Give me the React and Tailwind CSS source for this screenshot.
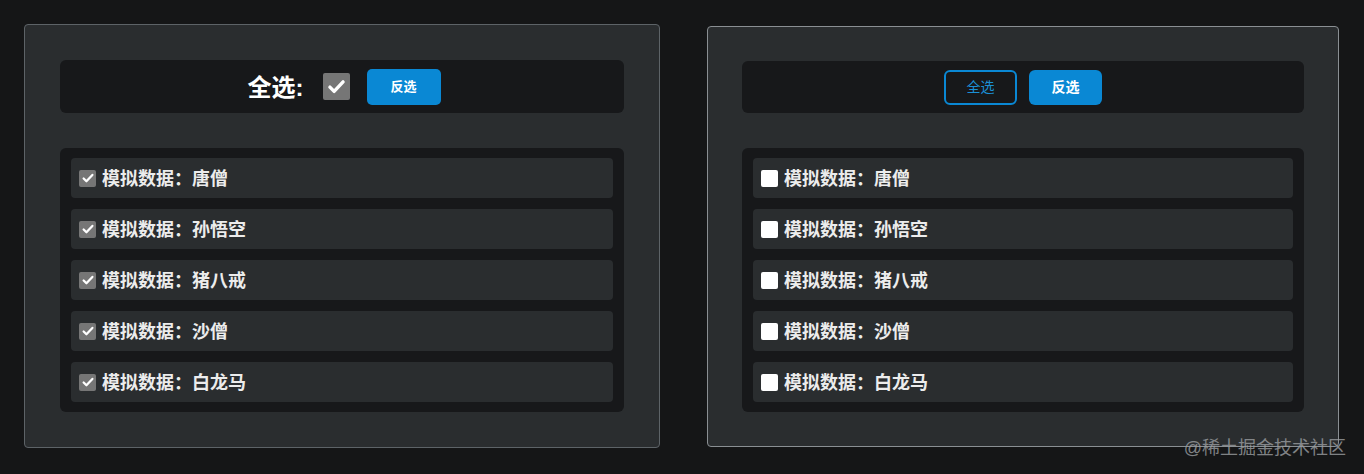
import { useState } from "react";

const names = ["唐僧", "孙悟空", "猪八戒", "沙僧", "白龙马"];

const font = { fontFamily: '"Liberation Sans", "Noto Sans CJK SC", sans-serif' };

function Check({ checked, big }) {
  const size = big ? "w-[27px] h-[27px]" : "w-[17px] h-[17px]";
  if (!checked) {
    return <span className={`${size} shrink-0 rounded-[2px] bg-white`} />;
  }
  return (
    <span className={`${size} shrink-0 rounded-[2px] bg-[#767676] flex items-center justify-center`}>
      <svg viewBox="0 0 16 16" className={big ? "w-[21px] h-[21px]" : "w-[14px] h-[14px]"}>
        <path d="M3 8.5l3.2 3.2L13 4.5" fill="none" stroke="#fff" strokeWidth="2.6" strokeLinecap="round" strokeLinejoin="round" />
      </svg>
    </span>
  );
}

function List({ checked }) {
  return (
    <div className="bg-[#17181a] rounded-md px-[11px] py-[10px] flex flex-col gap-[11px]">
      {names.map((n) => (
        <div key={n} className="h-10 bg-[#2a2d2f] rounded flex items-center pl-2 gap-[6px]">
          <Check checked={checked[n]} />
          <span className="text-[18px] font-bold text-[#ececec] leading-none pt-[2px]">模拟数据：{n}</span>
        </div>
      ))}
    </div>
  );
}

export default function App() {
  const [left, setLeft] = useState(Object.fromEntries(names.map((n) => [n, true])));
  const [right, setRight] = useState(Object.fromEntries(names.map((n) => [n, false])));
  const invert = (set) => set((prev) => Object.fromEntries(names.map((n) => [n, !prev[n]])));
  const allLeft = names.every((n) => left[n]);

  return (
    <div className="relative w-[1364px] h-[474px] bg-[#151617] flex items-start gap-[47px] pl-6 pt-6" style={font}>
      <div className="w-[636px] h-[424px] border border-[#5d6367] rounded bg-[#2a2d2f] p-[35px] flex flex-col gap-[35px]">
        <div className="h-[53px] bg-[#17181a] rounded-md flex items-center justify-center pl-1">
          <span className="text-[24px] font-bold text-white mr-[19px] pt-[2px]">全选:</span>
          <button onClick={() => setLeft(Object.fromEntries(names.map((n) => [n, !allLeft])))}>
            <Check checked={allLeft} big />
          </button>
          <button
            onClick={() => invert(setLeft)}
            className="ml-[17px] w-[74px] h-9 rounded-[5px] bg-[#0a88d4] text-white text-[13px] font-bold"
          >
            反选
          </button>
        </div>
        <List checked={left} />
      </div>

      <div className="mt-[2px] w-[632px] h-[421px] border border-[#8a8f93] rounded bg-[#2a2d2f] px-[34px] pt-[34px] flex flex-col gap-[34px]">
        <div className="h-[52px] bg-[#17181a] rounded-md flex items-center justify-center gap-3">
          <button
            onClick={() => setRight(Object.fromEntries(names.map((n) => [n, true])))}
            className="w-[73px] h-[35px] rounded-md border-2 border-[#0a88d4] text-[#1b8fd6] text-[14px]"
          >
            全选
          </button>
          <button
            onClick={() => invert(setRight)}
            className="w-[73px] h-[35px] rounded-md bg-[#0a88d4] text-white text-[14px] font-bold"
          >
            反选
          </button>
        </div>
        <div className="mt-px">
          <List checked={right} />
        </div>
      </div>

      <span className="absolute right-[18px] bottom-[12px] text-[18px] text-[#9a9da0] opacity-80">@稀土掘金技术社区</span>
    </div>
  );
}
